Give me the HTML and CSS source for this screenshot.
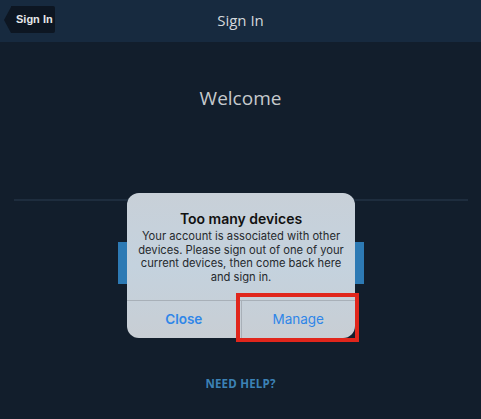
FILE: index.html
```html
<!DOCTYPE html>
<html>
<head>
<meta charset="utf-8">
<link rel="stylesheet" href="styles.css">
</head>
<body>
<div class="screen">
  <header class="topbar">
    <div class="back"><span class="back-label">Sign In</span></div>
    <div class="title">Sign In</div>
  </header>
  <main class="content">
    <div class="welcome">Welcome</div>
    <div class="rule"></div>
    <div class="primary"></div>
    <div class="help">NEED HELP?</div>
  </main>
  <div class="dialog">
    <div class="dialog-body">
      <div class="dialog-title">Too many devices</div>
      <div class="dialog-text">Your account is associated with other devices. Please sign out of one of your current devices, then come back here and sign in.</div>
    </div>
    <div class="dialog-actions">
      <div class="action">Close</div>
      <div class="action">Manage</div>
    </div>
  </div>
  <div class="highlight"></div>
</div>
</body>
</html>
```
FILE: styles.css
```css
html, body {
  margin: 0;
  padding: 0;
}
body {
  width: 481px;
  height: 419px;
  overflow: hidden;
  background: #121e2c;
  font-family: "Liberation Sans", Arial, sans-serif;
}
.screen {
  position: relative;
  width: 481px;
  height: 419px;
  background: #121e2c;
}
.topbar {
  height: 42px;
  background: #172a3f;
  display: flex;
  align-items: center;
  justify-content: center;
  position: relative;
}
.back {
  position: absolute;
  left: 4px;
  top: 6px;
  height: 27px;
  width: 51px;
  display: flex;
  align-items: center;
}
.back::before {
  content: "";
  width: 0;
  height: 0;
  border-top: 13.5px solid transparent;
  border-bottom: 13.5px solid transparent;
  border-right: 7px solid #0d1622;
}
.back-label {
  flex: 1;
  height: 27px;
  background: #0d1622;
  border-radius: 0 2px 2px 0;
  color: #e6e8ea;
  font-weight: bold;
  font-size: 11px;
  line-height: 27px;
  padding-left: 5px;
}
.title {
  color: #d4d8dc;
  font-size: 15px;
  font-family: "Open Sans", sans-serif;
  margin-top: -2px;
}
.content {
  display: flex;
  flex-direction: column;
  align-items: center;
}
.welcome {
  margin-top: 43px;
  color: #c6cacd;
  font-family: "Open Sans", sans-serif;
  font-size: 19px;
  line-height: 26px;
}
.rule {
  margin-top: 88px;
  align-self: stretch;
  margin-left: 14px;
  margin-right: 13px;
  height: 2px;
  background: #1e2d3e;
}
.primary {
  margin-top: 41px;
  width: 246px;
  height: 42px;
  margin-left: 1px;
  background: #2d7ab4;
}
.help {
  margin-top: 92px;
  color: #3c82b6;
  font-family: "Open Sans", sans-serif;
  font-weight: bold;
  font-size: 11.5px;
  letter-spacing: 0.2px;
}
.dialog {
  position: absolute;
  left: 127px;
  top: 193px;
  width: 228px;
  height: 145px;
  border-radius: 12px;
  background: linear-gradient(180deg, #c8d0d8 0%, #c4d2de 50%, #c8ced4 100%);
  display: flex;
  flex-direction: column;
  overflow: hidden;
  font-family: Inter, "Liberation Sans", sans-serif;
}
.dialog-body {
  height: 108px;
  box-sizing: border-box;
  padding: 17px 8px 0;
  text-align: center;
  border-bottom: 1px solid #a8b0b8;
}
.dialog-title {
  color: #111;
  font-weight: 600;
  font-size: 14px;
  line-height: 17px;
}
.dialog-text {
  margin-top: 3px;
  color: #262a2e;
  font-size: 11.2px;
  line-height: 13.7px;
}
.dialog-actions {
  flex: 1;
  display: flex;
}
.action {
  flex: 1;
  display: flex;
  align-items: center;
  justify-content: center;
  color: #2f86e8;
  font-size: 13.5px;
  padding-bottom: 1px;
}
.action:first-child {
  font-weight: 600;
  border-right: 1px solid #a8b0b8;
}
.highlight {
  position: absolute;
  left: 236px;
  top: 293px;
  width: 115px;
  height: 41px;
  border: 4px solid #e0261c;
}
```
